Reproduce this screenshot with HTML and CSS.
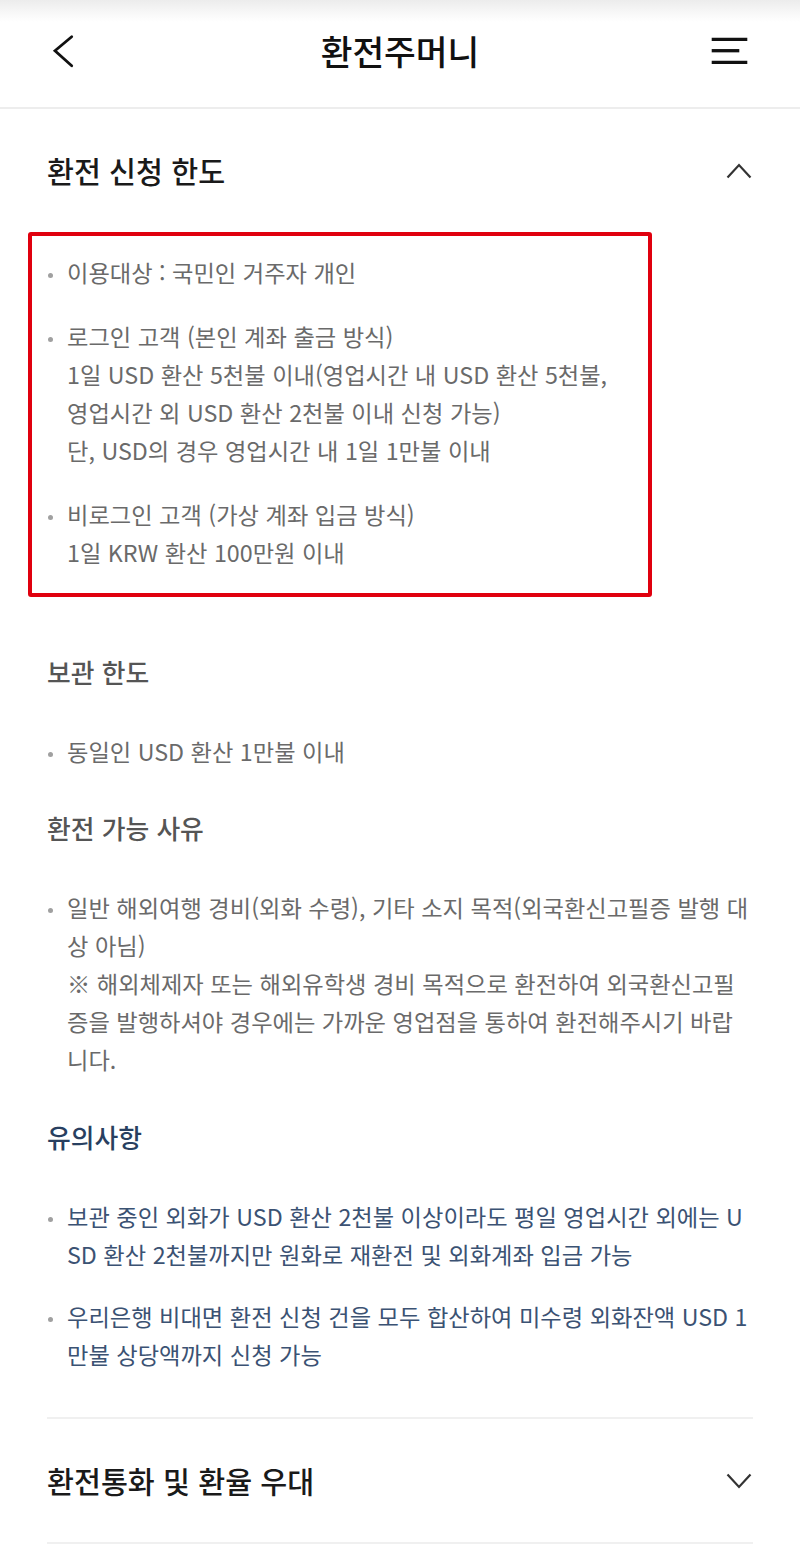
FILE: index.html
```html
<!DOCTYPE html>
<html lang="ko">
<head>
<meta charset="utf-8">
<title>환전주머니</title>
<link rel="stylesheet" href="styles.css">
</head>
<body>
<header class="topbar">
  <span class="back">
    <svg width="24" height="36" viewBox="0 0 24 36" aria-hidden="true"><polyline points="19.7,3.7 3,17.8 19.7,32.7" fill="none" stroke="#111" stroke-width="2.8" stroke-linecap="round" stroke-linejoin="miter"/></svg>
  </span>
  <h1 class="title">환전주머니</h1>
  <span class="menu">
    <svg width="40" height="30" viewBox="0 0 40 30" aria-hidden="true"><g stroke="#111" stroke-width="3.3"><line x1="1.7" y1="3.3" x2="37.3" y2="3.3"/><line x1="1.7" y1="14.7" x2="29.3" y2="14.7"/><line x1="1.7" y1="26.3" x2="37.3" y2="26.3"/></g></svg>
  </span>
</header>

<main class="page">
  <section class="acc-item">
    <div class="acc-head">
      <h2 class="acc-title">환전 신청 한도</h2>
      <svg class="chev" width="26" height="16" viewBox="0 0 26 16" aria-hidden="true"><polyline points="1.5,14.5 13,2 24.5,14.5" fill="none" stroke="#333" stroke-width="2.2"/></svg>
    </div>
    <div class="acc-body">
      <div class="highlight">
        <ul class="bullets">
          <li>이용대상 : 국민인 거주자 개인</li>
          <li>로그인 고객 (본인 계좌 출금 방식)<br>1일 USD 환산 5천불 이내(영업시간 내 USD 환산 5천불,<br>영업시간 외 USD 환산 2천불 이내 신청 가능)<br>단, USD의 경우 영업시간 내 1일 1만불 이내</li>
          <li>비로그인 고객 (가상 계좌 입금 방식)<br>1일 KRW 환산 100만원 이내</li>
        </ul>
      </div>

      <h3 class="sub first">보관 한도</h3>
      <ul class="bullets plain">
        <li>동일인 USD 환산 1만불 이내</li>
      </ul>

      <h3 class="sub">환전 가능 사유</h3>
      <ul class="bullets plain">
        <li>일반 해외여행 경비(외화 수령), 기타 소지 목적(외국환신고필증 발행 대<br>상 아님)<br>※ 해외체제자 또는 해외유학생 경비 목적으로 환전하여 외국환신고필<br>증을 발행하셔야 경우에는 가까운 영업점을 통하여 환전해주시기 바랍<br>니다.</li>
      </ul>

      <h3 class="sub notice">유의사항</h3>
      <ul class="bullets plain notice-list">
        <li>보관 중인 외화가 USD 환산 2천불 이상이라도 평일 영업시간 외에는 U<br>SD 환산 2천불까지만 원화로 재환전 및 외화계좌 입금 가능</li>
        <li>우리은행 비대면 환전 신청 건을 모두 합산하여 미수령 외화잔액 USD 1<br>만불 상당액까지 신청 가능</li>
      </ul>
    </div>
  </section>

  <section class="acc-item">
    <div class="acc-head">
      <h2 class="acc-title">환전통화 및 환율 우대</h2>
      <svg class="chev" width="26" height="16" viewBox="0 0 26 16" aria-hidden="true"><polyline points="1.5,1.5 13,14 24.5,1.5" fill="none" stroke="#333" stroke-width="2.2"/></svg>
    </div>
  </section>
</main>
</body>
</html>
```

FILE: styles.css
```css
* { box-sizing: border-box; }

body {
  margin: 0;
  background: #fff;
  color: #6a6a6a;
  font-family: "Noto Sans CJK KR", "Noto Sans", sans-serif;
}

.topbar {
  display: grid;
  grid-template-columns: 1fr auto 1fr;
  align-items: center;
  height: 109px;
  padding-bottom: 6px;
  border-bottom: 2px solid #ededed;
  background: linear-gradient(#ececec 0, #f7f7f7 12px, #fff 22px);
}

.back { display: block; margin-left: 52px; line-height: 0; }
.menu { display: block; justify-self: end; margin-right: 50px; line-height: 0; }

.title {
  margin: 0;
  font-size: 34.5px;
  font-weight: 500;
  line-height: 1;
  color: #111;
}

.page { padding: 0 47px; }

.acc-item { border-bottom: 2px solid #f0f0f0; }

.acc-head {
  display: flex;
  align-items: center;
  justify-content: space-between;
  height: 123px;
}

.acc-title {
  margin: 0;
  font-size: 29.3px;
  font-weight: 500;
  color: #1a1a1a;
  line-height: 1.2;
}

.chev { display: block; margin-right: 1px; }

.acc-body { padding-bottom: 44px; }

.highlight {
  margin-left: -19px;
  width: 624px;
  border: 4px solid #e0000e;
  border-radius: 3px;
  padding: 17px 0 22px 35px;
}

.bullets {
  list-style: none;
  margin: 0;
  padding: 0;
  font-size: 23.25px;
  line-height: 38px;
  white-space: nowrap;
}

.bullets li {
  position: relative;
  padding-left: 0;
}

.bullets li + li { margin-top: 26px; }

.bullets li::before {
  content: "";
  position: absolute;
  left: -19px;
  top: 20px;
  width: 5px;
  height: 5px;
  border-radius: 50%;
  background: #a0a0a0;
}

.plain { margin-top: 40px; padding-left: 20px; }
.plain li + li { margin-top: 24px; }

.sub {
  margin: 38px 0 0;
  font-size: 25.8px;
  font-weight: 500;
  line-height: 40px;
  color: #555;
}

.sub.first { margin-top: 55px; }

.sub.notice { margin-top: 39px; color: #283f60; }

.notice-list { color: #3b5273; }
```
